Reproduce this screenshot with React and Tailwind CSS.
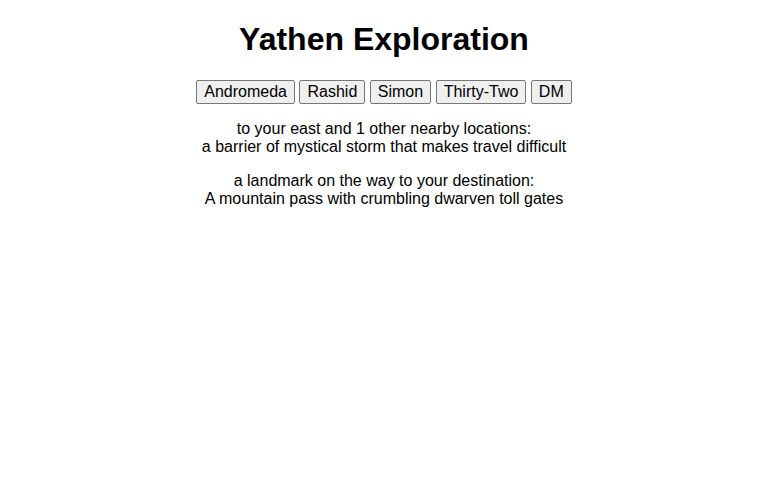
const PLAYERS = ['Andromeda', 'Rashid', 'Simon', 'Thirty-Two', 'DM']

export default function App() {
  return (
    <div className="min-h-screen bg-white text-black text-center font-['Liberation_Sans',Arial,sans-serif] text-base">
      <h1 className="text-[32px] font-bold leading-[37px] pt-[21px] pb-[22px]">Yathen Exploration</h1>

      <div className="flex justify-center gap-[4.5px]">
        {PLAYERS.map(name => (
          <button key={name}
            className="px-[7px] py-[2px] leading-[18px] border border-[#767676] rounded-[2px] bg-[#efefef] text-black">
            {name}
          </button>
        ))}
      </div>

      <p className="mt-4 leading-[18px]">
        to your east and 1 other nearby locations:<br />
        a barrier of mystical storm that makes travel difficult
      </p>
      <p className="mt-4 leading-[18px]">
        a landmark on the way to your destination:<br />
        A mountain pass with crumbling dwarven toll gates
      </p>
    </div>
  )
}
